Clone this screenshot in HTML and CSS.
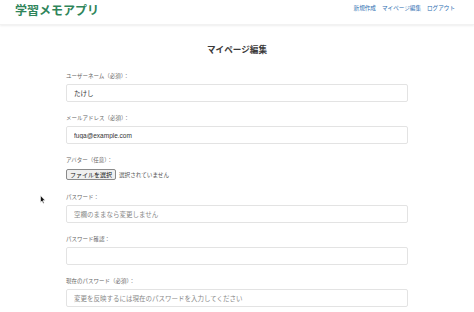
FILE: index.html
```html
<!DOCTYPE html>
<html lang="ja">
<head>
<meta charset="utf-8">
<title>マイページ編集</title>
<link rel="stylesheet" href="styles.css">
</head>
<body>
<header class="site-header">
  <div class="brand">学習メモアプリ</div>
  <nav class="nav">
    <a href="#" class="nav-link">新規作成</a>
    <a href="#" class="nav-link">マイページ編集</a>
    <a href="#" class="nav-link">ログアウト</a>
  </nav>
</header>
<main class="container">
  <h1 class="page-title">マイページ編集</h1>
  <form class="form">
    <div class="field">
      <label class="label">ユーザーネーム（必須）：</label>
      <input class="input" type="text" value="たけし">
    </div>
    <div class="field">
      <label class="label">メールアドレス（必須）：</label>
      <input class="input" type="text" value="fuga@example.com">
    </div>
    <div class="field">
      <label class="label">アバター（任意）：</label>
      <div class="file-row">
        <span class="file-btn">ファイルを選択</span>
        <span class="file-text">選択されていません</span>
      </div>
    </div>
    <div class="field">
      <label class="label">パスワード：</label>
      <input class="input" type="text" placeholder="空欄のままなら変更しません">
    </div>
    <div class="field">
      <label class="label">パスワード確認：</label>
      <input class="input" type="text">
    </div>
    <div class="field">
      <label class="label">現在のパスワード（必須）：</label>
      <input class="input" type="text" placeholder="変更を反映するには現在のパスワードを入力してください">
    </div>
  </form>
</main>
<svg class="cursor" width="6" height="9" viewBox="0 0 6 9"><path d="M0.5 0.5 L0.5 7.5 L2 6 L3.2 8.5 L4.2 8 L3 5.6 L5.2 5.6 Z" fill="#111" stroke="#fff" stroke-width="0.6"/></svg>
</body>
</html>
```
FILE: styles.css
```css
html, body {
  margin: 0;
  padding: 0;
  background: #fff;
  font-family: "Liberation Sans", "Noto Sans CJK JP", sans-serif;
}
body {
  position: relative;
  height: 312px;
  overflow: hidden;
}
.site-header {
  height: 25px;
  display: flex;
  justify-content: space-between;
  align-items: flex-start;
  padding: 0 19px 0 15px;
  box-shadow: 0 1px 2px rgba(0, 0, 0, 0.07);
  border-bottom: 1px solid #f2f2f2;
  box-sizing: border-box;
}
.brand {
  margin-top: 2px;
  font-size: 12px;
  line-height: 15px;
  font-weight: 700;
  color: #2f855a;
  font-family: "Noto Sans CJK JP", sans-serif;
}
.nav {
  display: flex;
  gap: 6px;
  margin-top: 4px;
}
.nav-link {
  font-size: 5.6px;
  line-height: 8px;
  color: #2b6cb0;
  text-decoration: none;
  font-family: "Noto Sans CJK JP", sans-serif;
}
.container {
  width: 342px;
  margin: 0 auto;
}
.page-title {
  margin: 17.5px 0 16.5px;
  text-align: center;
  font-size: 8.6px;
  line-height: 12px;
  font-weight: 700;
  color: #3a3a3a;
  font-family: "Noto Sans CJK JP", sans-serif;
}
.form {
  margin: 0;
}
.field {
  margin-bottom: 11px;
}
.label {
  display: block;
  font-size: 5.5px;
  line-height: 10px;
  margin-bottom: 3px;
  color: #666;
  font-family: "Noto Sans CJK JP", sans-serif;
}
.input {
  display: block;
  width: 100%;
  height: 18px;
  box-sizing: border-box;
  margin: 0;
  border: 1px solid #e3e3e3;
  border-radius: 2px;
  padding: 0 7px;
  font-size: 6.5px;
  color: #333;
  background: #fff;
  font-family: "Liberation Sans", "Noto Sans CJK JP", sans-serif;
  outline: none;
}
.input::placeholder {
  color: #888;
  font-family: "Noto Sans CJK JP", sans-serif;
}
.file-row {
  display: flex;
  align-items: center;
  height: 13px;
  gap: 3px;
}
.file-btn {
  display: inline-flex;
  align-items: center;
  height: 11px;
  box-sizing: border-box;
  padding: 0 3px;
  border: 1px solid #8a8a8a;
  border-radius: 2px;
  background: #efefef;
  font-size: 6px;
  color: #111;
  font-family: "Noto Sans CJK JP", sans-serif;
}
.file-text {
  font-size: 5.6px;
  color: #555;
  font-family: "Noto Sans CJK JP", sans-serif;
}
.cursor {
  position: absolute;
  left: 40px;
  top: 195px;
}
```
